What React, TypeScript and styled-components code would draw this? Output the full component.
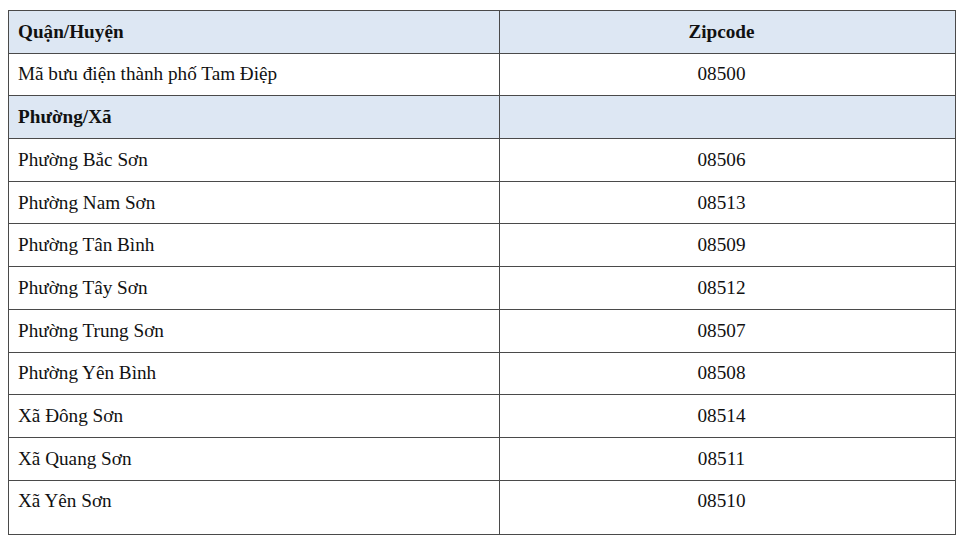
import React from 'react';
import styled, { createGlobalStyle } from 'styled-components';

const GlobalStyle = createGlobalStyle`
	html, body {
		margin: 0;
		padding: 0;
		background: #ffffff;
	}
	body {
		font-family: 'Liberation Serif', 'Times New Roman', serif;
		color: #111111;
	}
`;

const Page = styled.div`
	width: 960px;
	height: 540px;
	padding: 10px 0 0 8px;
	box-sizing: border-box;
`;

const Table = styled.table`
	width: 947px;
	border-collapse: collapse;
	table-layout: fixed;
	font-size: 19.2px;
	border: 1.5px solid #4a4a4a;
`;

const Row = styled.tr<{ $shaded?: boolean; $last?: boolean }>`
	height: ${({ $last }) => ($last ? '54px' : '42.7px')};
	background: ${({ $shaded }) => ($shaded ? '#dde7f3' : '#ffffff')};
`;

const Cell = styled.td<{ $center?: boolean; $bold?: boolean; $last?: boolean }>`
	border: 1.5px solid #4a4a4a;
	padding: ${({ $last, $center }) =>
		$last ? `9px ${$center ? '21px' : '9px'} 20px 9px` : `0 ${$center ? '21px' : '9px'} 0 9px`};
	vertical-align: ${({ $last }) => ($last ? 'top' : 'middle')};
	text-align: ${({ $center }) => ($center ? 'center' : 'left')};
	font-weight: ${({ $bold }) => ($bold ? 700 : 400)};
	box-sizing: border-box;
	line-height: 1.15;
`;

interface Entry {
	name: string;
	code: string;
	header?: boolean;
}

const rows: Entry[] = [
	{ name: 'Quận/Huyện', code: 'Zipcode', header: true },
	{ name: 'Mã bưu điện thành phố Tam Điệp', code: '08500' },
	{ name: 'Phường/Xã', code: '', header: true },
	{ name: 'Phường Bắc Sơn', code: '08506' },
	{ name: 'Phường Nam Sơn', code: '08513' },
	{ name: 'Phường Tân Bình', code: '08509' },
	{ name: 'Phường Tây Sơn', code: '08512' },
	{ name: 'Phường Trung Sơn', code: '08507' },
	{ name: 'Phường Yên Bình', code: '08508' },
	{ name: 'Xã Đông Sơn', code: '08514' },
	{ name: 'Xã Quang Sơn', code: '08511' },
	{ name: 'Xã Yên Sơn', code: '08510' },
];

function App() {
	return (
		<Page>
			<GlobalStyle />
			<Table>
				<colgroup>
					<col style={{ width: '491px' }} />
					<col style={{ width: '456px' }} />
				</colgroup>
				<tbody>
					{rows.map((r, i) => {
						const last = i === rows.length - 1;
						return (
							<Row key={r.name} $shaded={r.header} $last={last}>
								<Cell $bold={r.header} $last={last}>
									{r.name}
								</Cell>
								<Cell $center $bold={r.header} $last={last}>
									{r.code}
								</Cell>
							</Row>
						);
					})}
				</tbody>
			</Table>
		</Page>
	);
}

export default App;
